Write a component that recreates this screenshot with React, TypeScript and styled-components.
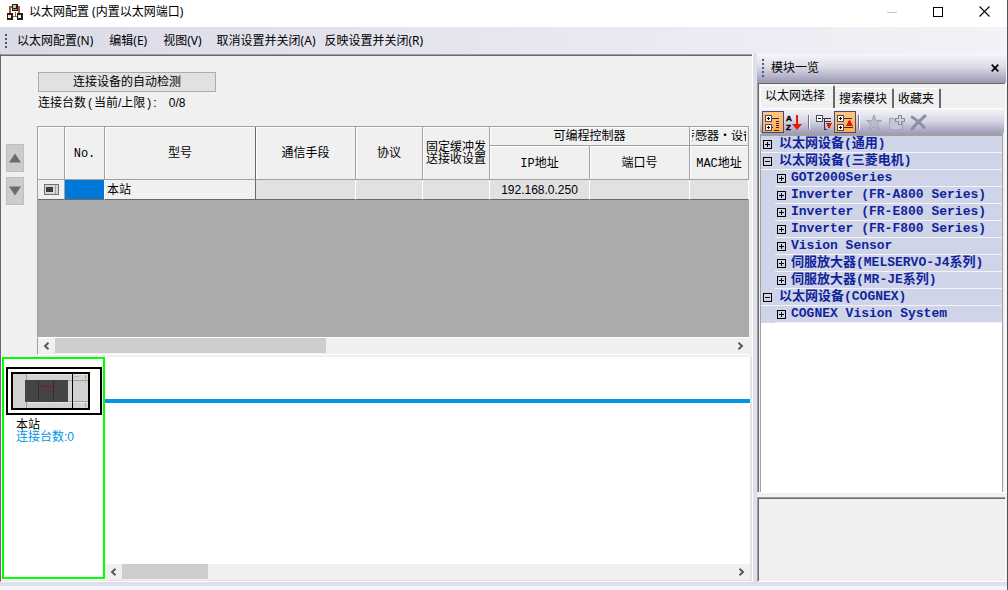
import React from "react";
import styled, { createGlobalStyle, css } from "styled-components";

const UI_FONT = `"Noto Sans", "Noto Sans CJK SC", sans-serif`;
const GRID_FONT = `"Liberation Mono", "Noto Sans CJK SC", monospace`;
const PLAIN_FONT = `"Liberation Sans", "Noto Sans CJK SC", sans-serif`;

const GlobalStyle = createGlobalStyle`
  *, *::before, *::after { box-sizing: border-box; }
  body { margin: 0; background: #ffffff; color: #000000; font: 12px/16px ${UI_FONT}; }
  button { font: inherit; color: inherit; border: 0; padding: 0; margin: 0; background: none; }
  svg { display: block; flex: none; }
`;

/* ---------- window frame ---------- */

const Window = styled.div`
  display: flex;
  flex-direction: column;
  height: 100vh;
  overflow: hidden;
  border-right: 1px solid #50545c;
`;

const TitleBar = styled.header`
  display: flex;
  align-items: center;
  flex: none;
  height: 27px;
  padding: 0 0 4px 7px;
  background: #ffffff;
`;

const Title = styled.h1`
  flex: 1;
  margin: 0 0 0 6px;
  font-size: 12px;
  font-weight: 400;
  line-height: 16px;
  white-space: pre;
`;

const WindowButton = styled.button`
  display: flex;
  align-items: center;
  justify-content: center;
  width: 46px;
  height: 23px;
`;

const MenuBar = styled.nav`
  display: flex;
  align-items: center;
  gap: 9px;
  flex: none;
  height: 27px;
  padding-left: 5px;
  background: linear-gradient(to right, #dbdbe8, #f2f2f8);
`;

const MenuItem = styled.button<{ $wide?: boolean }>`
  padding: ${(p) => (p.$wide ? "0 6px 0 1px" : "0")};
  white-space: nowrap;
`;

const Grip = styled.span<{ $tall?: boolean }>`
  width: 2px;
  height: ${(p) => (p.$tall ? 18 : 14)}px;
  background: repeating-linear-gradient(#55557a 0 2px, transparent 2px 4px);
`;

const Main = styled.main`
  display: flex;
  flex: 1;
  min-height: 0;
`;

const Splitter = styled.div`
  flex: none;
  width: 5px;
  background: #dfdfea;
  border-left: 1px solid #ffffff;
`;

const StatusBar = styled.footer`
  flex: none;
  height: 8px;
  border-top: 4px solid #dfdfea;
  background: #f4f4fb;
`;

/* ---------- left side: device list ---------- */

const Workspace = styled.section`
  display: flex;
  flex-direction: column;
  flex: 1;
  min-width: 0;
  border-left: 1px solid #696969;
  border-bottom: 1px solid #ffffff;
  box-shadow: inset 0 1px #a0a0a0, inset 0 2px #696969;
  padding-top: 2px;
  background: #f0f0f0;
`;

const DetectArea = styled.div`
  padding: 16px 0 12px 37px;
`;

const DetectButton = styled.button`
  display: block;
  width: 178px;
  height: 20px;
  border: 1px solid #adadad;
  background: #e1e1e1;
  font: 12px/18px ${PLAIN_FONT};
`;

const CountLine = styled.p`
  margin: 0;
  font: 12px/22px ${PLAIN_FONT};
  height: 22px;
`;

const CountValue = styled.span`
  margin-left: 12px;
`;

const CountParen = styled.span`
  padding: 0 2px;
`;

const ListRow = styled.div`
  display: flex;
  padding-right: 3px;
`;

const OrderButtons = styled.div`
  display: flex;
  flex-direction: column;
  gap: 5px;
  flex: none;
  width: 36px;
  padding: 18px 0 0 5px;
`;

const OrderButton = styled.button`
  display: flex;
  align-items: center;
  justify-content: center;
  width: 18px;
  height: 28px;
  border: 1px solid #bfbfbf;
  background: #cccccc;
`;

const Grid = styled.div`
  flex: 1;
  min-width: 0;
  overflow: hidden;
`;

const DeviceTable = styled.table`
  width: 100%;
  table-layout: fixed;
  border-collapse: separate;
  border-spacing: 0;
  border-top: 1px solid #a0a0a0;
  border-left: 1px solid #a0a0a0;
  background: #f0f0f0;
  font: 12px/12px ${GRID_FONT};
`;

const HeadCell = styled.th<{ $dark?: boolean }>`
  padding: 2px 0 0;
  overflow: hidden;
  font-weight: 400;
  white-space: nowrap;
  border-right: 1px solid ${(p) => (p.$dark ? "#696969" : "#a0a0a0")};
  border-bottom: 1px solid #a0a0a0;
  box-shadow: inset 1px 1px #ffffff;
`;

const HeadRow = styled.tr<{ $height: number }>`
  height: ${(p) => p.$height}px;
`;

const ClippedLabel = styled.div`
  display: flex;
  justify-content: center;
  margin: 0 2px;
  overflow: hidden;
  line-height: 14px;
`;

const Cell = styled.td<{ $tone?: "plain" | "selected" | "name" }>`
  height: 20px;
  padding: 0 2px;
  line-height: 16px;
  white-space: nowrap;
  text-align: center;
  border-right: 1px solid #ffffff;
  border-bottom: 1px solid #696969;
  background: #e1e1e1;
  font-family: ${PLAIN_FONT};
  ${(p) => p.$tone === "plain" && css`background: #f0f0f0; border-right-color: #a0a0a0;`}
  ${(p) => p.$tone === "selected" && css`background: #0078d7;`}
  ${(p) =>
    p.$tone === "name" &&
    css`background: #f0f0f0; text-align: left; border-right-color: #696969;`}
`;

const StationThumb = styled.span`
  display: flex;
  justify-content: center;
`;

const EmptyArea = styled.div`
  height: 137px;
  border-left: 1px solid #a0a0a0;
  background: #ababab;
`;

const ScrollBar = styled.div`
  display: flex;
  flex: none;
  height: 16px;
  background: #f0f0f0;
`;

const GridScroll = styled.div`
  border: solid #ffffff;
  border-width: 1px 0;
  border-left: 1px solid #a0a0a0;
`;

const ScrollArrow = styled.button`
  display: flex;
  align-items: center;
  justify-content: center;
  flex: none;
  width: 17px;
`;

const ScrollTrack = styled.div`
  flex: 1;
`;

const ScrollThumb = styled.div`
  height: 15px;
  background: #cdcdcd;
`;

/* ---------- left side: network diagram ---------- */

const Diagram = styled.div`
  display: flex;
  flex: 1;
  min-height: 0;
  margin-top: 2px;
  padding-left: 1px;
  border-right: 2px solid #e3e3e3;
  border-bottom: 1px solid #e3e3e3;
  background: #ffffff;
`;

const Station = styled.div`
  flex: none;
  width: 103px;
  margin-bottom: 1px;
  padding: 8px 1px 0 2px;
  border: 2px solid #00ff00;
`;

const StationFrame = styled.div`
  height: 48px;
  padding: 3px;
  border: 2px solid #000000;
`;

const StationText = styled.div<{ $accent?: boolean }>`
  padding-left: 10px;
  font: 12px/12px ${PLAIN_FONT};
  color: ${(p) => (p.$accent ? "#0096e6" : "#000000")};
`;

const StationLabels = styled.div`
  padding-top: 4px;
`;

const Bus = styled.div`
  display: flex;
  flex-direction: column;
  flex: 1;
  min-width: 0;
`;

const BusLine = styled.div`
  flex: 1;
  padding-top: 42px;

  &::before {
    content: "";
    display: block;
    height: 4px;
    background: #0096e6;
  }
`;

/* ---------- right side: module list ---------- */

const SidePanel = styled.aside`
  display: flex;
  flex-direction: column;
  flex: 0 0 250px;
  background: #f0f0f0;
  padding-right: 1px;
`;

const PanelHeader = styled.div`
  display: flex;
  align-items: center;
  flex: none;
  height: 28px;
  padding: 0 7px 0 5px;
  background: linear-gradient(#f6f6fb 0%, #dcdce8 45%, #9d9bb7 100%);
`;

const PanelTitle = styled.h2`
  flex: 1;
  margin: 0 0 0 7px;
  font-size: 12px;
  font-weight: 400;
  line-height: 16px;
`;

const Sunken = styled.div`
  border: 1px solid #ffffff;
  border-top-color: #a0a0a0;
  border-left-color: #a0a0a0;
  box-shadow: inset 1px 1px #696969;
`;

const PanelBody = styled(Sunken)`
  display: flex;
  flex-direction: column;
  flex: 1;
  min-height: 0;
  padding: 2px 1px 0 2px;
`;

const Details = styled(Sunken)`
  flex: none;
  height: 85px;
  margin-top: 4px;
`;

const Tabs = styled.div`
  display: flex;
  align-items: flex-end;
  flex: none;
  height: 23px;
`;

const Tab = styled.button<{ $active?: boolean }>`
  height: ${(p) => (p.$active ? 23 : 20)}px;
  padding: ${(p) => (p.$active ? "0 8px 2px 4px" : "0 5px 0 4px")};
  border-top: 1px solid #ffffff;
  border-left: ${(p) => (p.$active ? 1 : 0)}px solid #ffffff;
  border-right: 2px solid #696969;
  border-radius: 2px 2px 0 0;
  white-space: nowrap;
`;

const ToolBar = styled.div`
  display: flex;
  align-items: center;
  flex: none;
  height: 26px;
  padding: 0 2px;
  border-top: 1px solid #ffffff;
  background: linear-gradient(#f4f4fa 0%, #d9d9e6 45%, #9d9bb7 100%);
  border-radius: 0 0 3px 3px;
`;

const Tool = styled.button<{ $on?: boolean }>`
  display: flex;
  flex: none;
  width: 22px;
  height: 22px;
  ${(p) => p.$on && css`
    background: linear-gradient(#ffc684, #ffab52);
    box-shadow: inset 0 0 0 1px #4b4b6f;
  `}
`;

const ToolGap = styled.span`
  flex: none;
  width: 2px;
  height: 14px;
  margin: 0 2px;
  border-left: 1px solid #6d6d8f;
  border-right: 1px solid #ffffff;
`;

const Tree = styled.div`
  flex: 1;
  min-height: 0;
  margin-right: 1px;
  overflow: hidden;
  border: solid #a0a0a0;
  border-width: 2px 1px 0;
  background: #ffffff;
`;

const Branch = styled.ul<{ $nested?: boolean }>`
  margin: 0;
  padding: 0 0 0 ${(p) => (p.$nested ? 14 : 0)}px;
  list-style: none;
  background: #d0d4e8;
`;

const TreeItem = styled.button<{ $nested?: boolean }>`
  display: flex;
  align-items: center;
  gap: ${(p) => (p.$nested ? 5 : 7)}px;
  width: 100%;
  height: 17px;
  padding-left: 2px;
  border-bottom: 1px solid #f4f4f8;
  color: #10249a;
  font: 700 13px/16px ${GRID_FONT};
  text-align: left;
  white-space: pre;
`;

/* ---------- icons ---------- */

const AppIcon = () => (
  <svg width="16" height="16" viewBox="0 0 16 16" shapeRendering="crispEdges">
    <path d="M3 10V3h3M12 10V3h-2" fill="none" stroke="#a85a2a" strokeWidth="2" />
    <path d="M8 8v4M4 12h8" fill="none" stroke="#a85a2a" strokeWidth="1" />
    <rect x="5" y="0" width="6" height="7" fill="#222222" />
    <rect x="6" y="1" width="3" height="3" fill="#b9c9b0" />
    <rect x="6" y="5" width="4" height="1" fill="#8f8f8f" />
    <rect x="0" y="9" width="6" height="7" fill="#222222" />
    <rect x="1" y="11" width="3" height="3" fill="#f5f0c8" />
    <rect x="10" y="9" width="6" height="7" fill="#222222" />
    <rect x="11" y="11" width="3" height="3" fill="#f5f0c8" />
  </svg>
);

const MinimizeIcon = () => (
  <svg width="10" height="10" viewBox="0 0 10 10" shapeRendering="crispEdges">
    <rect y="5" width="10" height="1" fill="#c4c4c4" />
  </svg>
);

const MaximizeIcon = () => (
  <svg width="10" height="10" viewBox="0 0 10 10" shapeRendering="crispEdges">
    <rect x=".5" y=".5" width="9" height="9" fill="none" stroke="#000000" />
  </svg>
);

const CloseIcon = () => (
  <svg width="11" height="11" viewBox="0 0 11 11">
    <path d="M.5 .5l10 10M10.5 .5l-10 10" stroke="#000000" strokeWidth="1.1" />
  </svg>
);

const PanelCloseIcon = () => (
  <svg width="8" height="8" viewBox="0 0 8 8">
    <path d="M.7 .7l6.6 6.6M7.3 .7L.7 7.3" stroke="#000000" strokeWidth="1.7" />
  </svg>
);

const Triangle = ({ down }: { down?: boolean }) => (
  <svg width="12" height="10" viewBox="0 0 12 10">
    <path d={down ? "M0 .5h12L6 9.5z" : "M0 9.5h12L6 .5z"} fill="#6b6b6b" />
  </svg>
);

const Chevron = ({ right }: { right?: boolean }) => (
  <svg width="7" height="8" viewBox="0 0 7 8">
    <path
      d={right ? "M1.5 .7L5 4 1.5 7.3" : "M5.5 .7L2 4l3.5 3.3"}
      fill="none"
      stroke="#555555"
      strokeWidth="1.9"
    />
  </svg>
);

const SmallStation = () => (
  <svg width="15" height="11" viewBox="0 0 15 11" shapeRendering="crispEdges">
    <rect x=".5" y=".5" width="14" height="10" fill="#d8d8d8" stroke="#707070" />
    <rect x="2" y="3" width="7" height="5" fill="#3a3a3a" />
    <rect x="4" y="4" width="3" height="1" fill="#8c2038" />
    <path d="M11.5 1v9" stroke="#a0a0a0" />
  </svg>
);

const StationDrawing = () => (
  <svg width="79" height="38" viewBox="0 0 79 38" shapeRendering="crispEdges">
    <rect x="1" y="1" width="77" height="36" fill="#d2d2d2" stroke="#000000" strokeWidth="2" />
    <path d="M15.5 2v34M16 8.5h61M16 29.5h61" stroke="#a0a0a0" fill="none" />
    <path d="M16 2.5h61M16 30.5h61" stroke="#e6e6e6" fill="none" />
    <rect x="14" y="8" width="43" height="22" fill="#444444" />
    <path d="M27.5 9v20M42.5 9v20" stroke="#303030" />
    <path d="M28 14.5h14" stroke="#8c1030" />
    <path d="M61.5 2v34" stroke="#000000" />
    <path d="M63 4.5h5" stroke="#b4b4b4" />
    <path d="M74.5 3v4M74.5 10v1M74.5 31v4" stroke="#a6b43c" />
  </svg>
);

const BoxMark = ({ open }: { open?: boolean }) => (
  <svg width="9" height="9" viewBox="0 0 9 9" shapeRendering="crispEdges">
    <rect x=".5" y=".5" width="8" height="8" fill="none" stroke="#000000" />
    <path d={open ? "M2 4.5h5" : "M2 4.5h5M4.5 2v5"} stroke="#000000" />
  </svg>
);

const MiniBox = ({ x, y, minus }: { x: number; y: number; minus?: boolean }) => (
  <g transform={`translate(${x} ${y})`}>
    <rect x=".5" y=".5" width="6" height="6" fill="#ffffff" stroke="#4b4b60" />
    <path d={minus ? "M2 3.5h3" : "M2 3.5h3M3.5 2v3"} stroke="#000000" />
  </g>
);

const CategoryIcon = () => (
  <svg width="22" height="22" viewBox="0 0 22 22" shapeRendering="crispEdges">
    <MiniBox x={3} y={4} />
    <MiniBox x={3} y={13} />
    <path
      d="M10 7.5h7M10 16.5h1M14 10.5h3M14 12.5h3M14 14.5h3M14 16.5h3M12 19.5h5"
      stroke="#3b2a20"
    />
  </svg>
);

const SortIcon = () => (
  <svg width="22" height="22" viewBox="0 0 22 22">
    <g fontFamily="Liberation Sans, sans-serif" fontWeight="700" fontSize="8" stroke="#000000" strokeWidth=".4">
      <text x="2" y="10">A</text>
      <text x="2" y="19">Z</text>
    </g>
    <path d="M12 4h2v9h4l-5 6-5-6h4z" fill="#e01b00" />
  </svg>
);

const CollapseIcon = () => (
  <svg width="22" height="22" viewBox="0 0 22 22" shapeRendering="crispEdges">
    <MiniBox x={4} y={4} minus />
    <path d="M11 7.5h8M12.5 8v11M13 10.5h6M13 18.5h2" stroke="#33334d" fill="none" />
    <path d="M14 12h6l-3 6z" fill="#e01b00" />
  </svg>
);

const ExpandIcon = () => (
  <svg width="22" height="22" viewBox="0 0 22 22" shapeRendering="crispEdges">
    <MiniBox x={3} y={4} />
    <MiniBox x={3} y={13} />
    <path d="M10 7.5h8M10 16.5h9" stroke="#3b2a20" />
    <path d="M12 15h7l-3-6h-1z" fill="#e01b00" />
  </svg>
);

const StarIcon = () => (
  <svg width="22" height="22" viewBox="0 0 22 22">
    <path
      d="M12 4l2 5.5h5.500L15 13l2.500 6-5.500-3.500L6.500 19 9 13 4.500 9.500H10z"
      fill="#bcbccb"
      stroke="#a0a0b6"
      strokeWidth="1"
    />
  </svg>
);

const AddFolderIcon = () => (
  <svg width="22" height="22" viewBox="0 0 22 22" shapeRendering="crispEdges">
    <path d="M5.5 7.5h4l2 2h7v9h-13z" fill="#c6c6d3" stroke="#a6a6bb" />
    <path d="M14.5 4.5h3v3h3v3h-3v3h-3v-3h-3v-3h3z" fill="#d4d4de" stroke="#8c8ca8" />
  </svg>
);

const DeleteIcon = () => (
  <svg width="22" height="22" viewBox="0 0 22 22">
    <path d="M5 5.500C10 8 15 13 19 17.500" fill="none" stroke="#8d8da8" strokeWidth="3" />
    <path d="M19 5C14 9 10 13 6 18" fill="none" stroke="#8d8da8" strokeWidth="3" strokeLinecap="round" />
  </svg>
);

/* ---------- data ---------- */

const MENUS = [
  { label: "以太网配置(N)", wide: true },
  { label: "编辑(E)", wide: true },
  { label: "视图(V)", wide: true },
  { label: "取消设置并关闭(A)" },
  { label: "反映设置并关闭(R)" },
];

const MODULES = [
  { name: "以太网设备(通用)", children: [] as string[] },
  {
    name: "以太网设备(三菱电机)",
    children: [
      "GOT2000Series",
      "Inverter (FR-A800 Series)",
      "Inverter (FR-E800 Series)",
      "Inverter (FR-F800 Series)",
      "Vision Sensor",
      "伺服放大器(MELSERVO-J4系列)",
      "伺服放大器(MR-JE系列)",
    ],
  },
  { name: "以太网设备(COGNEX)", children: ["COGNEX Vision System"] },
];

const COLUMN_WIDTHS = [27, 40, 151, 100, 67, 67, 100, 100];

const HorizontalScroll = ({ share }: { share: number }) => (
  <ScrollBar>
    <ScrollArrow aria-label="向左滚动"><Chevron /></ScrollArrow>
    <ScrollTrack>
      <ScrollThumb style={{ width: `${share}%` }} />
    </ScrollTrack>
    <ScrollArrow aria-label="向右滚动"><Chevron right /></ScrollArrow>
  </ScrollBar>
);

export default function App() {
  return (
    <Window>
      <GlobalStyle />
      <TitleBar>
        <AppIcon />
        <Title>以太网配置 (内置以太网端口)</Title>
        <WindowButton aria-label="最小化"><MinimizeIcon /></WindowButton>
        <WindowButton aria-label="最大化"><MaximizeIcon /></WindowButton>
        <WindowButton aria-label="关闭"><CloseIcon /></WindowButton>
      </TitleBar>
      <MenuBar>
        <Grip />
        {MENUS.map((m) => (
          <MenuItem key={m.label} $wide={m.wide}>{m.label}</MenuItem>
        ))}
      </MenuBar>

      <Main>
        <Workspace>
          <DetectArea>
            <DetectButton>连接设备的自动检测</DetectButton>
            <CountLine>
              连接台数<CountParen>(</CountParen>当前/上限<CountParen>)</CountParen>:
              <CountValue>0/8</CountValue>
            </CountLine>
          </DetectArea>

          <ListRow>
            <OrderButtons>
              <OrderButton aria-label="上移"><Triangle /></OrderButton>
              <OrderButton aria-label="下移"><Triangle down /></OrderButton>
            </OrderButtons>
            <Grid>
              <DeviceTable>
                <colgroup>
                  {COLUMN_WIDTHS.map((w, i) => (
                    <col key={i} width={w} />
                  ))}
                  <col />
                </colgroup>
                <thead>
                  <HeadRow $height={19}>
                    <HeadCell rowSpan={2} />
                    <HeadCell rowSpan={2}>No.</HeadCell>
                    <HeadCell rowSpan={2} $dark>型号</HeadCell>
                    <HeadCell rowSpan={2}>通信手段</HeadCell>
                    <HeadCell rowSpan={2}>协议</HeadCell>
                    <HeadCell rowSpan={2}>固定缓冲发<br />送接收设置</HeadCell>
                    <HeadCell colSpan={2}>可编程控制器</HeadCell>
                    <HeadCell><ClippedLabel>传感器・设备</ClippedLabel></HeadCell>
                  </HeadRow>
                  <HeadRow $height={34}>
                    <HeadCell>IP地址</HeadCell>
                    <HeadCell>端口号</HeadCell>
                    <HeadCell>MAC地址</HeadCell>
                  </HeadRow>
                </thead>
                <tbody>
                  <tr>
                    <Cell $tone="plain"><StationThumb><SmallStation /></StationThumb></Cell>
                    <Cell $tone="selected" />
                    <Cell $tone="name">本站</Cell>
                    <Cell />
                    <Cell />
                    <Cell />
                    <Cell>192.168.0.250</Cell>
                    <Cell />
                    <Cell />
                  </tr>
                </tbody>
              </DeviceTable>
              <EmptyArea />
              <GridScroll><HorizontalScroll share={40} /></GridScroll>
            </Grid>
          </ListRow>

          <Diagram>
            <Station>
              <StationFrame><StationDrawing /></StationFrame>
              <StationLabels>
                <StationText>本站</StationText>
                <StationText $accent>连接台数:0</StationText>
              </StationLabels>
            </Station>
            <Bus>
              <BusLine />
              <HorizontalScroll share={14} />
            </Bus>
          </Diagram>
        </Workspace>

        <Splitter />

        <SidePanel>
          <PanelHeader>
            <Grip $tall />
            <PanelTitle>模块一览</PanelTitle>
            <button aria-label="关闭面板"><PanelCloseIcon /></button>
          </PanelHeader>
          <PanelBody>
            <Tabs role="tablist">
              <Tab role="tab" aria-selected="true" $active>以太网选择</Tab>
              <Tab role="tab" aria-selected="false">搜索模块</Tab>
              <Tab role="tab" aria-selected="false">收藏夹</Tab>
            </Tabs>
            <ToolBar>
              <Tool $on aria-label="分类"><CategoryIcon /></Tool>
              <Tool aria-label="排序"><SortIcon /></Tool>
              <ToolGap />
              <Tool aria-label="全部折叠"><CollapseIcon /></Tool>
              <Tool $on aria-label="全部展开"><ExpandIcon /></Tool>
              <ToolGap />
              <Tool aria-label="收藏"><StarIcon /></Tool>
              <Tool aria-label="添加文件夹"><AddFolderIcon /></Tool>
              <Tool aria-label="删除"><DeleteIcon /></Tool>
            </ToolBar>
            <Tree>
              <Branch>
                {MODULES.map((m) => (
                  <li key={m.name}>
                    <TreeItem>
                      <BoxMark open={m.children.length > 0} />
                      {m.name}
                    </TreeItem>
                    {m.children.length > 0 && (
                      <Branch $nested>
                        {m.children.map((c) => (
                          <li key={c}>
                            <TreeItem $nested>
                              <BoxMark />
                              {c}
                            </TreeItem>
                          </li>
                        ))}
                      </Branch>
                    )}
                  </li>
                ))}
              </Branch>
            </Tree>
          </PanelBody>
          <Details />
        </SidePanel>
      </Main>
      <StatusBar />
    </Window>
  );
}
